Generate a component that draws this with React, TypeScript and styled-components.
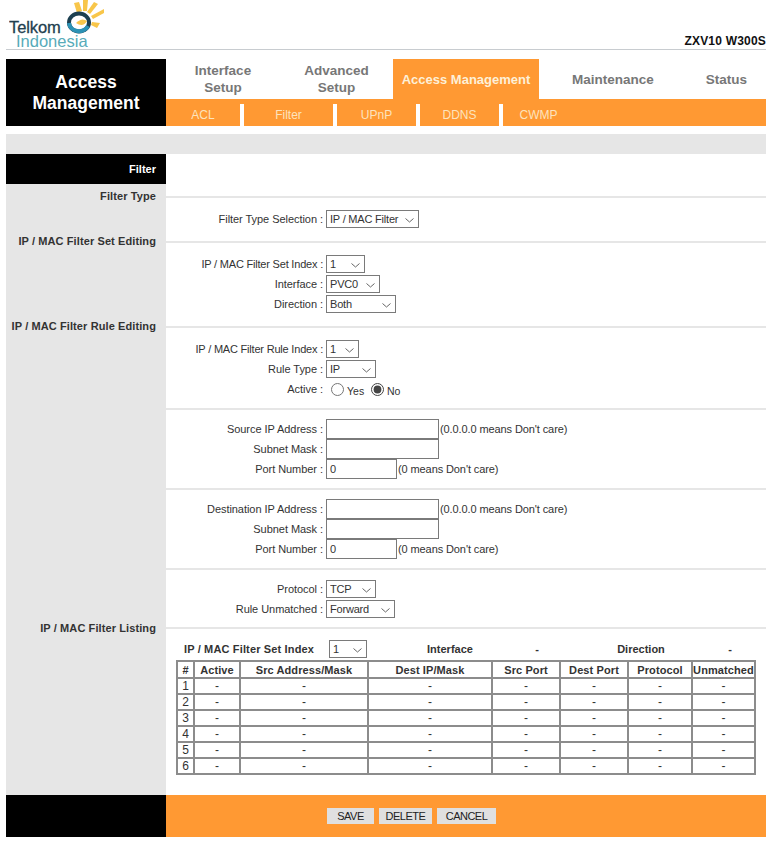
import React from 'react';
import styled, { createGlobalStyle } from 'styled-components';

const GlobalStyle = createGlobalStyle`
  html, body {
    margin: 0;
    padding: 0;
    background: #fff;
    font-family: "Liberation Sans", Arial, sans-serif;
    font-size: 11px;
    color: #333;
  }
`;

const ORANGE = '#ff9933';
const GRAY = '#e6e6e6';

const Page = styled.div`
  width: 760px;
  margin: 0 6px;
`;

const TopBar = styled.header`
  display: flex;
  justify-content: space-between;
  align-items: flex-end;
  height: 49px;
  border-bottom: 1px solid #c8ccd0;
  margin-bottom: 9px;
`;

const LogoArt = styled.svg`
  display: block;
  margin-left: 3px;
`;

const Model = styled.div`
  font-size: 12px;
  font-weight: bold;
  color: #111;
  padding-bottom: 1px;
  letter-spacing: 0.2px;
`;

const Nav = styled.nav`
  display: grid;
  grid-template-columns: 160px 1fr;
  height: 67px;
`;

const NavTitle = styled.div`
  background: #000;
  color: #fff;
  font-size: 17.5px;
  font-weight: bold;
  line-height: 21px;
  text-align: center;
  display: flex;
  align-items: center;
  justify-content: center;
`;

const NavRight = styled.div`
  display: flex;
  flex-direction: column;
`;

const Tabs = styled.div`
  display: flex;
  height: 40px;
`;

const Tab = styled.div<{ $w: number; $active?: boolean }>`
  width: ${(p) => p.$w}px;
  display: flex;
  align-items: center;
  justify-content: center;
  text-align: center;
  font-size: ${(p) => (p.$active ? 13 : 13.5)}px;
  font-weight: bold;
  line-height: 17px;
  color: ${(p) => (p.$active ? '#fdf0d8' : '#777')};
  background: ${(p) => (p.$active ? ORANGE : 'transparent')};
`;

const SubNav = styled.div`
  display: flex;
  height: 27px;
  background: ${ORANGE};
`;

const SubItem = styled.div<{ $w: number }>`
  width: ${(p) => p.$w}px;
  height: 27px;
  line-height: 32px;
  text-align: center;
  font-size: 12px;
  color: #fde3bd;
`;

const SubSep = styled.div`
  width: 4px;
  height: 22px;
  margin-top: 5px;
  background: #fff;
`;

const GrayBar = styled.div`
  height: 20px;
  margin-top: 8px;
  background: ${GRAY};
`;

const Section = styled.section`
  display: grid;
  grid-template-columns: 160px 1fr;
`;

const TitleCell = styled.div`
  height: 30px;
  background: #000;
  color: #fff;
  font-weight: bold;
  display: flex;
  align-items: center;
  justify-content: flex-end;
  padding-right: 10px;
`;

const Side = styled.div`
  background: ${GRAY};
`;

const SideLabel = styled.div<{ $h: number }>`
  box-sizing: border-box;
  height: ${(p) => p.$h}px;
  display: flex;
  align-items: center;
  justify-content: flex-end;
  padding: 0 10px 2px 0;
  font-weight: bold;
  color: #333;
  letter-spacing: 0.1px;
`;

const Main = styled.div`
  min-width: 0;
`;

const Head = styled.div<{ $h: number }>`
  height: ${(p) => p.$h}px;
  display: flex;
  align-items: center;
`;

const Rule = styled.div`
  flex: 1;
  height: 2px;
  background: ${GRAY};
`;

const Row = styled.div`
  display: flex;
  align-items: center;
  height: 20px;
`;

const Label = styled.div<{ $tight?: boolean }>`
  width: 157px;
  flex: none;
  text-align: right;
  margin-right: 3px;
  letter-spacing: ${(p) => (p.$tight ? -0.2 : -0.05)}px;
`;

const Note = styled.span`
  margin-left: 1px;
  letter-spacing: -0.1px;
`;

const SelectBox = styled.div<{ $w: number }>`
  position: relative;
  width: ${(p) => p.$w}px;
  height: 18px;
  flex: none;
`;

const NativeSelect = styled.select`
  appearance: none;
  display: block;
  width: 100%;
  height: 100%;
  margin: 0;
  padding: 0 0 0 3px;
  border: 1px solid #7a7a7a;
  border-radius: 0;
  background: #fff;
  color: #333;
  font: 11px "Liberation Sans", Arial, sans-serif;
  letter-spacing: -0.2px;
`;

const Chevron = styled.svg`
  position: absolute;
  right: 5px;
  top: 8px;
  pointer-events: none;
`;

const TextInput = styled.input<{ $w: number }>`
  box-sizing: border-box;
  width: ${(p) => p.$w}px;
  height: 20px;
  margin: 0;
  padding: 0 3px;
  border: 1px solid #7a7a7a;
  border-radius: 0;
  color: #333;
  font: 11px "Liberation Sans", Arial, sans-serif;
  flex: none;
`;

const Radios = styled.div`
  display: flex;
  align-items: center;
  margin-left: 5px;
`;

const Radio = styled.input`
  width: 13px;
  height: 13px;
  margin: 0 3px 0 0;
  accent-color: #444;
`;

const RadioText = styled.span`
  width: 19px;
  font-size: 10.5px;
  margin: 3px 5px 0 0;
`;

const ListingHead = styled.div`
  display: flex;
  align-items: center;
  height: 18px;
  margin: 4px 0 2px 18px;
  font-weight: bold;
`;

const ListingCell = styled.div<{ $w: number; $gap?: number }>`
  width: ${(p) => p.$w}px;
  margin-left: ${(p) => p.$gap || 0}px;
  text-align: center;
  flex: none;
`;

const ListingName = styled.div`
  width: 145px;
  flex: none;
  letter-spacing: 0.15px;
`;

const Table = styled.table`
  width: 578px;
  margin: 0 0 20px 10px;
  border-collapse: collapse;
  table-layout: fixed;
`;

const Th = styled.th<{ $w: number }>`
  box-sizing: border-box;
  width: ${(p) => p.$w}px;
  height: 17px;
  padding: 0;
  border: 2px solid #8c8c8c;
  font-size: 11px;
  font-weight: bold;
  letter-spacing: 0.1px;
  color: #333;
  white-space: nowrap;
`;

const Td = styled.td`
  box-sizing: border-box;
  height: 16px;
  padding: 0;
  border: 2px solid #8c8c8c;
  text-align: center;
  font-size: 12px;
  line-height: 14px;
`;

const Footer = styled.footer`
  display: grid;
  grid-template-columns: 160px 1fr;
  height: 42px;
`;

const FooterSide = styled.div`
  background: #000;
`;

const FooterBar = styled.div`
  display: flex;
  align-items: center;
  gap: 5px;
  background: ${ORANGE};
  padding-left: 161px;
`;

const Button = styled.button<{ $w: number }>`
  width: ${(p) => p.$w}px;
  height: 16px;
  padding: 0;
  border: none;
  background: #e0e0e0;
  color: #222;
  font: 11px "Liberation Sans", Arial, sans-serif;
  letter-spacing: -0.5px;
`;

const Logo = () => (
  <LogoArt width="100" height="49" viewBox="0 0 100 49">
    <g fill="#f8c64a">
      <path d="M65 3 L70 2 L73 11 L68 13 Z" />
      <path d="M74 0 L79 0 L78 11 L74 11 Z" />
      <path d="M85 2 L89 4 L81 14 L78 12 Z" />
      <path d="M95 9 L95 13 L84 19 L82 16 Z" />
      <path d="M91 23 L88 28 L82 25 L83 22 Z" />
    </g>
    <ellipse cx="70" cy="22.5" rx="10" ry="9" fill="#fff" stroke="#1c3f50" strokeWidth="4" />
    <path d="M60 23 A10 9 0 0 0 79 26" fill="none" stroke="#2b92b5" strokeWidth="4" />
    <path d="M67 23 Q73 17 78 21 Q74 28 67 23 Z" fill="#f8c64a" />
    <text x="0" y="33" fontFamily="'Liberation Sans', Arial, sans-serif" fontSize="16.5" letterSpacing="-0.1" stroke="#22404f" strokeWidth="0.3" fill="#22404f">
      Telkom
    </text>
    <text x="7" y="47" fontFamily="'Liberation Sans', Arial, sans-serif" fontSize="16.5" fill="#57abb9">
      Indonesia
    </text>
  </LogoArt>
);

function Select({ w, options }: { w: number; options: string[] }) {
  return (
    <SelectBox $w={w}>
      <NativeSelect defaultValue={options[0]}>
        {options.map((o) => (
          <option key={o}>{o}</option>
        ))}
      </NativeSelect>
      <Chevron width="9" height="5" viewBox="0 0 9 5">
        <polyline points="0.5,0.5 4.5,4 8.5,0.5" fill="none" stroke="#666" strokeWidth="1" />
      </Chevron>
    </SelectBox>
  );
}

function SelectRow({ label, w, options }: { label: string; w: number; options: string[] }) {
  return (
    <Row>
      <Label $tight={label.startsWith('IP /')}>{label} :</Label>
      <Select w={w} options={options} />
    </Row>
  );
}

function InputRow({ label, w, value, note }: { label: string; w: number; value?: string; note?: string }) {
  return (
    <Row>
      <Label>{label} :</Label>
      <TextInput $w={w} defaultValue={value} />
      {note && <Note>{note}</Note>}
    </Row>
  );
}

const columns: [string, number][] = [
  ['#', 17],
  ['Active', 46],
  ['Src Address/Mask', 128],
  ['Dest IP/Mask', 124],
  ['Src Port', 68],
  ['Dest Port', 68],
  ['Protocol', 64],
  ['Unmatched', 63],
];

export default function App() {
  return (
    <Page>
      <GlobalStyle />
      <TopBar>
        <Logo />
        <Model>ZXV10 W300S</Model>
      </TopBar>

      <Nav>
        <NavTitle>
          Access
          <br />
          Management
        </NavTitle>
        <NavRight>
          <Tabs>
            <Tab $w={114}>
              Interface
              <br />
              Setup
            </Tab>
            <Tab $w={113}>
              Advanced
              <br />
              Setup
            </Tab>
            <Tab $w={146} $active>
              Access Management
            </Tab>
            <Tab $w={148}>Maintenance</Tab>
            <Tab $w={79}>Status</Tab>
          </Tabs>
          <SubNav>
            <SubItem $w={74}>ACL</SubItem>
            <SubSep />
            <SubItem $w={89}>Filter</SubItem>
            <SubSep />
            <SubItem $w={79}>UPnP</SubItem>
            <SubSep />
            <SubItem $w={79}>DDNS</SubItem>
            <SubSep />
            <SubItem $w={71}>CWMP</SubItem>
          </SubNav>
        </NavRight>
      </Nav>

      <GrayBar />

      <Section>
        <TitleCell>Filter</TitleCell>
        <Main />
      </Section>

      <Section>
        <Side>
          <SideLabel $h={25}>Filter Type</SideLabel>
        </Side>
        <Main>
          <Head $h={25}>
            <Rule />
          </Head>
          <SelectRow label="Filter Type Selection" w={93} options={['IP / MAC Filter']} />
        </Main>
      </Section>

      <Section>
        <Side>
          <SideLabel $h={25}>IP / MAC Filter Set Editing</SideLabel>
        </Side>
        <Main>
          <Head $h={25}>
            <Rule />
          </Head>
          <SelectRow label="IP / MAC Filter Set Index" w={39} options={['1']} />
          <SelectRow label="Interface" w={54} options={['PVC0']} />
          <SelectRow label="Direction" w={70} options={['Both']} />
        </Main>
      </Section>

      <Section>
        <Side>
          <SideLabel $h={25}>IP / MAC Filter Rule Editing</SideLabel>
        </Side>
        <Main>
          <Head $h={25}>
            <Rule />
          </Head>
          <SelectRow label="IP / MAC Filter Rule Index" w={33} options={['1']} />
          <SelectRow label="Rule Type" w={50} options={['IP']} />
          <Row>
            <Label>Active :</Label>
            <Radios>
              <Radio type="radio" name="active" />
              <RadioText>Yes</RadioText>
              <Radio type="radio" name="active" defaultChecked />
              <RadioText>No</RadioText>
            </Radios>
          </Row>
          <Head $h={20}>
            <Rule />
          </Head>
          <InputRow label="Source IP Address" w={113} note="(0.0.0.0 means Don't care)" />
          <InputRow label="Subnet Mask" w={113} />
          <InputRow label="Port Number" w={71} value="0" note="(0 means Don't care)" />
          <Head $h={20}>
            <Rule />
          </Head>
          <InputRow label="Destination IP Address" w={113} note="(0.0.0.0 means Don't care)" />
          <InputRow label="Subnet Mask" w={113} />
          <InputRow label="Port Number" w={71} value="0" note="(0 means Don't care)" />
          <Head $h={20}>
            <Rule />
          </Head>
          <SelectRow label="Protocol" w={50} options={['TCP']} />
          <SelectRow label="Rule Unmatched" w={69} options={['Forward']} />
        </Main>
      </Section>

      <Section>
        <Side>
          <SideLabel $h={19}>IP / MAC Filter Listing</SideLabel>
        </Side>
        <Main>
          <Head $h={17}>
            <Rule />
          </Head>
          <ListingHead>
            <ListingName>IP / MAC Filter Set Index</ListingName>
            <Select w={38} options={['1']} />
            <ListingCell $w={130} $gap={18}>Interface</ListingCell>
            <ListingCell $w={44}>-</ListingCell>
            <ListingCell $w={164}>Direction</ListingCell>
            <ListingCell $w={14}>-</ListingCell>
          </ListingHead>
          <Table>
            <thead>
              <tr>
                {columns.map(([name, w]) => (
                  <Th key={name} $w={w}>
                    {name}
                  </Th>
                ))}
              </tr>
            </thead>
            <tbody>
              {[1, 2, 3, 4, 5, 6].map((n) => (
                <tr key={n}>
                  <Td>{n}</Td>
                  {columns.slice(1).map(([name]) => (
                    <Td key={name}>-</Td>
                  ))}
                </tr>
              ))}
            </tbody>
          </Table>
        </Main>
      </Section>

      <Footer>
        <FooterSide />
        <FooterBar>
          <Button $w={47}>SAVE</Button>
          <Button $w={53}>DELETE</Button>
          <Button $w={59}>CANCEL</Button>
        </FooterBar>
      </Footer>
    </Page>
  );
}
